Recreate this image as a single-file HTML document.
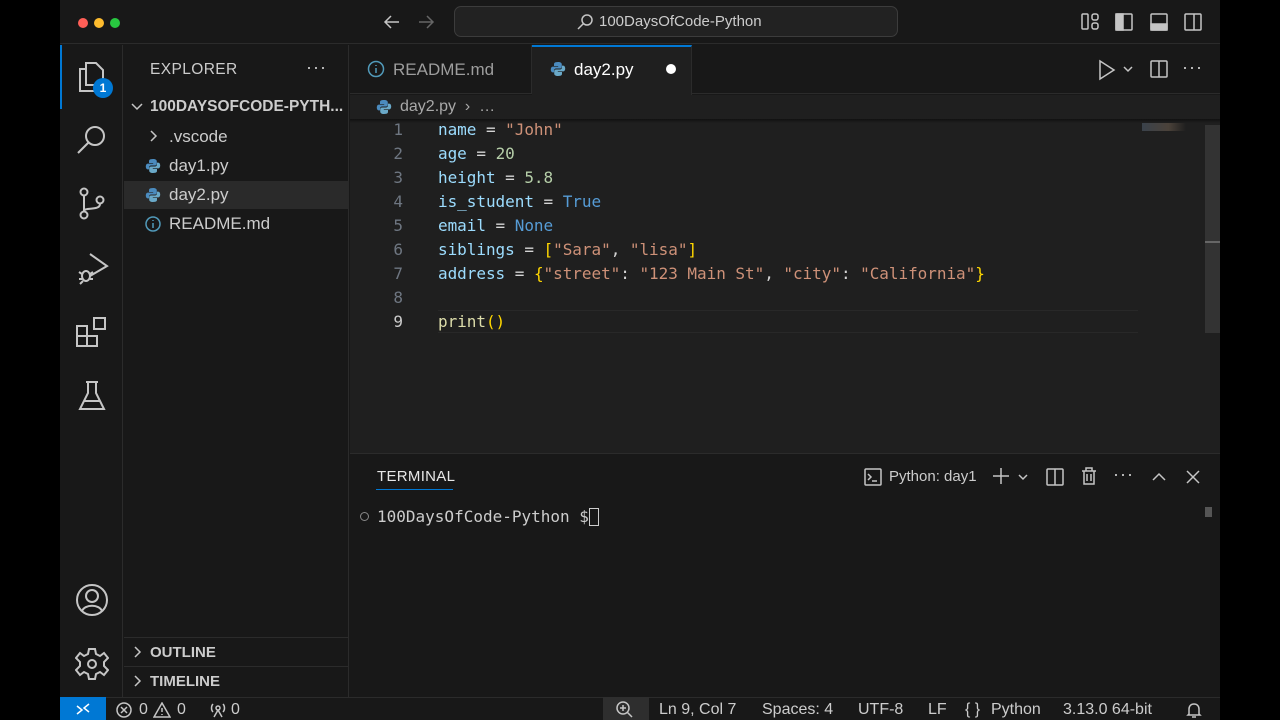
<!DOCTYPE html>
<html><head><meta charset="utf-8"><style>
*{margin:0;padding:0;box-sizing:border-box}
body{width:1280px;height:720px;background:#000;position:relative;overflow:hidden;font-family:"Liberation Sans",sans-serif;color:#ccc}
.a{position:absolute}
.win{left:60px;top:0;width:1160px;height:720px;background:#181818;position:absolute;overflow:hidden}
.mono{font-family:"DejaVu Sans Mono",monospace;font-size:16px}
svg{position:absolute;fill:none;stroke:#c5c5c5;stroke-width:1.5}
.code div{height:24px;line-height:24px;white-space:pre}
.v{color:#9cdcfe}.s{color:#ce9178}.n{color:#b5cea8}.k{color:#569cd6}.b{color:#ffd700}.f{color:#dcdcaa}.p{color:#d4d4d4}
.ln div{height:24px;line-height:24px;text-align:right;color:#6e7681}
.st{position:absolute;top:701px;font-size:16px;color:#ccc;white-space:pre}
</style></head><body>
<div class="win">
<div class="a" style="left:0;top:0;width:1160px;height:44px;background:#181818;border-bottom:1px solid #2b2b2b"></div>
<div class="a" style="left:18px;top:18px;width:10px;height:10px;border-radius:50%;background:#ff5f57"></div>
<div class="a" style="left:34px;top:18px;width:10px;height:10px;border-radius:50%;background:#febc2e"></div>
<div class="a" style="left:50px;top:18px;width:10px;height:10px;border-radius:50%;background:#28c840"></div>
<svg style="left:322px;top:12px" width="20" height="20"><path d="M17 10H3M9 4L3 10L9 16"/></svg>
<svg style="left:356px;top:12px;stroke:#666" width="20" height="20"><path d="M3 10H17M11 4L17 10L11 16"/></svg>
<div class="a" style="left:394px;top:6px;width:444px;height:31px;border:1px solid #3c3c3c;border-radius:7px;background:#222"></div>
<svg style="left:516px;top:13px" width="18" height="18"><circle cx="11" cy="7" r="5"/><path d="M7.5 10.5L2 16"/></svg>
<div class="a" style="left:539px;top:13px;font-size:15px;color:#ccc">100DaysOfCode-Python</div>
<svg style="left:1020px;top:12px" width="20" height="20"><rect x="2" y="2" width="6" height="15" rx="1"/><rect x="12" y="2" width="6" height="6" rx="2"/><rect x="12" y="11" width="6" height="6" rx="2"/></svg>
<svg style="left:1054px;top:12px" width="20" height="20"><rect x="2" y="2" width="16" height="16" rx="1"/><rect x="2" y="2" width="7" height="16" fill="#c5c5c5"/></svg>
<svg style="left:1089px;top:12px" width="20" height="20"><rect x="2" y="2" width="16" height="16" rx="1"/><rect x="2" y="12" width="16" height="6" fill="#c5c5c5"/></svg>
<svg style="left:1123px;top:12px" width="20" height="20"><rect x="2" y="2" width="16" height="16" rx="1"/><path d="M11 2V18"/></svg>
<div class="a" style="left:0;top:45px;width:63px;height:652px;background:#181818;border-right:1px solid #2b2b2b"></div>
<div class="a" style="left:0;top:45px;width:2px;height:64px;background:#0078d4"></div>
<svg style="left:16px;top:60px;stroke-width:2" width="32" height="34"><path d="M10 3H20L27 10V25H10Z"/><path d="M10 9H4V31H19V25"/></svg>
<div class="a" style="left:33px;top:78px;width:20px;height:20px;border-radius:50%;background:#0078d4;color:#fff;font-size:12px;font-weight:bold;text-align:center;line-height:20px">1</div>
<svg style="left:15px;top:123px;stroke-width:2" width="34" height="34"><circle cx="20" cy="13" r="9"/><path d="M13.5 19.5L3 30"/></svg>
<svg style="left:16px;top:187px;stroke-width:2" width="32" height="34"><circle cx="8" cy="5" r="3.5"/><circle cx="8" cy="28" r="3.5"/><circle cx="24" cy="13" r="3.5"/><path d="M8 9V24M24 17C24 24 8 20 8 24"/></svg>
<svg style="left:16px;top:252px;stroke-width:2" width="34" height="34"><path d="M14 2L31 14L14 24"/><ellipse cx="10" cy="24" rx="4" ry="5"/><path d="M3 20L6 22M3 27H6M4 32L7 29M17 20L14 22M17 27H14"/></svg>
<svg style="left:15px;top:316px;stroke-width:2" width="34" height="34"><rect x="2" y="10" width="10" height="10"/><rect x="2" y="20" width="10" height="10"/><rect x="12" y="20" width="10" height="10"/><rect x="19" y="2" width="11" height="11"/></svg>
<svg style="left:18px;top:380px;stroke-width:2" width="30" height="34"><path d="M8 2H20M10 2V13L2 29H26L18 13V2M6 21H22"/></svg>
<svg style="left:15px;top:583px;stroke-width:2" width="34" height="34"><circle cx="17" cy="17" r="15"/><circle cx="17" cy="13" r="6"/><path d="M7 28C10 21 24 21 27 28"/></svg>
<svg style="left:15px;top:647px;stroke-width:2" width="34" height="34"><path d="M14 2H20L21 7L25 9L29 6L33 11L29 15V19L33 23L29 28L25 25L21 27L20 32H14L13 27L9 25L5 28L1 23L5 19V15L1 11L5 6L9 9L13 7Z"/><circle cx="17" cy="17" r="4"/></svg>
<div class="a" style="left:64px;top:45px;width:225px;height:652px;background:#181818;border-right:1px solid #2b2b2b"></div>
<div class="a" style="left:90px;top:61px;font-size:15.5px;color:#ccc;letter-spacing:.4px">EXPLORER</div>
<div class="a" style="left:246px;top:57px;font-size:18px;color:#ccc;letter-spacing:1px">···</div>
<svg style="left:70px;top:100px" width="14" height="14"><path d="M2 4L7 9L12 4"/></svg>
<div class="a" style="left:90px;top:98px;font-size:15.5px;font-weight:bold;color:#ccc">100DAYSOFCODE-PYTH...</div>
<svg style="left:87px;top:129px" width="14" height="14"><path d="M4 2L9 7L4 12"/></svg>
<div class="a" style="left:109px;top:127px;font-size:17px;color:#ccc">.vscode</div>
<div class="a" style="left:64px;top:181px;width:225px;height:28px;background:#2a2a2a"></div>
<svg style="left:85px;top:158px;stroke:none" width="16" height="16"><path fill="#4b8bbe" d="M8 1C4 1 4 2.5 4 3.5V5H8.2V5.6H2.8C1.5 5.6 0.8 7 0.8 8.5S1.5 11.4 2.8 11.4H4V9.6C4 8.4 5 7.5 6 7.5H10C11 7.5 11.8 6.7 11.8 5.7V3.4C11.8 2 10.5 1 8 1Z"/><path fill="#6aa9c8" d="M8 15C12 15 12 13.5 12 12.5V11H7.8V10.4H13.2C14.5 10.4 15.2 9 15.2 7.5S14.5 4.6 13.2 4.6H12V6.4C12 7.6 11 8.5 10 8.5H6C5 8.5 4.2 9.3 4.2 10.3V12.6C4.2 14 5.5 15 8 15Z"/></svg>
<div class="a" style="left:109px;top:156px;font-size:17px;color:#ccc">day1.py</div>
<svg style="left:85px;top:187px;stroke:none" width="16" height="16"><path fill="#4b8bbe" d="M8 1C4 1 4 2.5 4 3.5V5H8.2V5.6H2.8C1.5 5.6 0.8 7 0.8 8.5S1.5 11.4 2.8 11.4H4V9.6C4 8.4 5 7.5 6 7.5H10C11 7.5 11.8 6.7 11.8 5.7V3.4C11.8 2 10.5 1 8 1Z"/><path fill="#6aa9c8" d="M8 15C12 15 12 13.5 12 12.5V11H7.8V10.4H13.2C14.5 10.4 15.2 9 15.2 7.5S14.5 4.6 13.2 4.6H12V6.4C12 7.6 11 8.5 10 8.5H6C5 8.5 4.2 9.3 4.2 10.3V12.6C4.2 14 5.5 15 8 15Z"/></svg>
<div class="a" style="left:109px;top:185px;font-size:17px;color:#ccc">day2.py</div>
<svg style="left:85px;top:216px;stroke:#519aba" width="16" height="16"><circle cx="8" cy="8" r="7"/><path d="M8 7V12M8 4V5"/></svg>
<div class="a" style="left:109px;top:214px;font-size:17px;color:#ccc">README.md</div>
<div class="a" style="left:64px;top:637px;width:225px;height:1px;background:#2b2b2b"></div>
<svg style="left:71px;top:645px" width="14" height="14"><path d="M4 2L9 7L4 12"/></svg>
<div class="a" style="left:90px;top:644px;font-size:15px;font-weight:bold;color:#ccc">OUTLINE</div>
<div class="a" style="left:64px;top:666px;width:225px;height:1px;background:#2b2b2b"></div>
<svg style="left:71px;top:674px" width="14" height="14"><path d="M4 2L9 7L4 12"/></svg>
<div class="a" style="left:90px;top:673px;font-size:15px;font-weight:bold;color:#ccc">TIMELINE</div>
<div class="a" style="left:290px;top:45px;width:870px;height:49px;background:#181818;border-bottom:1px solid #2b2b2b"></div>
<div class="a" style="left:290px;top:45px;width:182px;height:49px;border-right:1px solid #2b2b2b"></div>
<svg style="left:307px;top:60px;stroke:#519aba" width="18" height="18"><circle cx="9" cy="9" r="7.5"/><path d="M9 8V13M9 5V6"/></svg>
<div class="a" style="left:333px;top:60px;font-size:17px;color:#9d9d9d">README.md</div>
<div class="a" style="left:472px;top:45px;width:160px;height:50px;background:#1f1f1f;border-top:2px solid #0078d4;border-right:1px solid #2b2b2b"></div>
<svg style="left:490px;top:61px;stroke:none" width="16" height="16"><path fill="#4b8bbe" d="M8 1C4 1 4 2.5 4 3.5V5H8.2V5.6H2.8C1.5 5.6 0.8 7 0.8 8.5S1.5 11.4 2.8 11.4H4V9.6C4 8.4 5 7.5 6 7.5H10C11 7.5 11.8 6.7 11.8 5.7V3.4C11.8 2 10.5 1 8 1Z"/><path fill="#6aa9c8" d="M8 15C12 15 12 13.5 12 12.5V11H7.8V10.4H13.2C14.5 10.4 15.2 9 15.2 7.5S14.5 4.6 13.2 4.6H12V6.4C12 7.6 11 8.5 10 8.5H6C5 8.5 4.2 9.3 4.2 10.3V12.6C4.2 14 5.5 15 8 15Z"/></svg>
<div class="a" style="left:514px;top:60px;font-size:17px;color:#fff">day2.py</div>
<div class="a" style="left:606px;top:64px;width:10px;height:10px;border-radius:50%;background:#fff"></div>
<svg style="left:1037px;top:59px" width="20" height="22"><path d="M3 2L17 11L3 20Z"/></svg>
<svg style="left:1062px;top:64px" width="12" height="10"><path d="M2 3L6 7L10 3"/></svg>
<svg style="left:1089px;top:59px" width="20" height="20"><rect x="2" y="2" width="16" height="16" rx="1"/><path d="M10 2V18"/></svg>
<div class="a" style="left:1122px;top:57px;font-size:18px;color:#ccc;letter-spacing:1px">···</div>
<div class="a" style="left:290px;top:95px;width:870px;height:602px;background:#1f1f1f"></div>
<svg style="left:316px;top:99px;stroke:none" width="16" height="16"><path fill="#4b8bbe" d="M8 1C4 1 4 2.5 4 3.5V5H8.2V5.6H2.8C1.5 5.6 0.8 7 0.8 8.5S1.5 11.4 2.8 11.4H4V9.6C4 8.4 5 7.5 6 7.5H10C11 7.5 11.8 6.7 11.8 5.7V3.4C11.8 2 10.5 1 8 1Z"/><path fill="#6aa9c8" d="M8 15C12 15 12 13.5 12 12.5V11H7.8V10.4H13.2C14.5 10.4 15.2 9 15.2 7.5S14.5 4.6 13.2 4.6H12V6.4C12 7.6 11 8.5 10 8.5H6C5 8.5 4.2 9.3 4.2 10.3V12.6C4.2 14 5.5 15 8 15Z"/></svg>
<div class="a" style="left:340px;top:98px;font-size:16px;color:#a9a9a9">day2.py &nbsp;›&nbsp; …</div>
<div class="a" style="left:290px;top:119px;width:915px;height:4px;background:linear-gradient(#111,#1f1f1f)"></div>
<div class="a" style="left:378px;top:310px;width:700px;height:23px;border-top:1px solid #282828;border-bottom:1px solid #282828"></div>
<div class="a ln mono" style="left:300px;top:118px;width:43px">
<div>1</div><div>2</div><div>3</div><div>4</div><div>5</div><div>6</div><div>7</div><div>8</div><div style="color:#ccc">9</div></div>
<div class="a code mono" style="left:378px;top:118px;letter-spacing:-0.04px">
<div><span class="v">name</span><span class="p"> = </span><span class="s">"John"</span></div>
<div><span class="v">age</span><span class="p"> = </span><span class="n">20</span></div>
<div><span class="v">height</span><span class="p"> = </span><span class="n">5.8</span></div>
<div><span class="v">is_student</span><span class="p"> = </span><span class="k">True</span></div>
<div><span class="v">email</span><span class="p"> = </span><span class="k">None</span></div>
<div><span class="v">siblings</span><span class="p"> = </span><span class="b">[</span><span class="s">"Sara"</span><span class="p">, </span><span class="s">"lisa"</span><span class="b">]</span></div>
<div><span class="v">address</span><span class="p"> = </span><span class="b">{</span><span class="s">"street"</span><span class="p">: </span><span class="s">"123 Main St"</span><span class="p">, </span><span class="s">"city"</span><span class="p">: </span><span class="s">"California"</span><span class="b">}</span></div>
<div> </div>
<div><span class="f">print</span><span class="b">()</span></div>
</div>
<div class="a" style="left:1082px;top:123px;width:44px;height:8px;background:linear-gradient(90deg,#567 0,#765 60%,transparent);opacity:.5"></div>
<div class="a" style="left:1145px;top:125px;width:15px;height:208px;background:#333"></div>
<div class="a" style="left:1145px;top:241px;width:15px;height:2px;background:#666"></div>
<div class="a" style="left:290px;top:453px;width:870px;height:244px;background:#181818;border-top:1px solid #2b2b2b"></div>
<div class="a" style="left:317px;top:468px;font-size:15px;color:#e7e7e7;letter-spacing:.3px">TERMINAL</div>
<div class="a" style="left:316px;top:489px;width:77px;height:1px;background:#0078d4"></div>
<svg style="left:803px;top:467px" width="20" height="20"><rect x="2" y="2" width="16" height="16" rx="1"/><path d="M5 7L8 10L5 13M9 14H14"/></svg>
<div class="a" style="left:829px;top:468px;font-size:15px;color:#ccc">Python: day1</div>
<svg style="left:931px;top:466px" width="20" height="20"><path d="M10 2V18M2 10H18"/></svg>
<svg style="left:957px;top:472px" width="12" height="10"><path d="M2 3L6 7L10 3"/></svg>
<svg style="left:985px;top:467px" width="20" height="20"><rect x="2" y="2" width="16" height="16" rx="1"/><path d="M10 2V18"/></svg>
<svg style="left:1019px;top:466px" width="20" height="20"><path d="M3 5H17M7 5V2H13V5M5 5V18H15V5M8 8V15M12 8V15"/></svg>
<div class="a" style="left:1053px;top:464px;font-size:18px;color:#ccc;letter-spacing:1px">···</div>
<svg style="left:1089px;top:467px" width="20" height="20"><path d="M4 13L10 7L16 13"/></svg>
<svg style="left:1123px;top:467px" width="20" height="20"><path d="M4 4L16 16M16 4L4 16"/></svg>
<div class="a" style="left:300px;top:512px;width:9px;height:9px;border-radius:50%;border:1px solid #888"></div>
<div class="a mono" style="left:317px;top:507px;color:#ccc;white-space:pre">100DaysOfCode-Python $ </div>
<div class="a" style="left:529px;top:508px;width:10px;height:18px;border:1px solid #ccc"></div>
<div class="a" style="left:1145px;top:507px;width:7px;height:10px;background:#555"></div>
<div class="a" style="left:0;top:697px;width:1160px;height:23px;background:#181818;border-top:1px solid #2b2b2b"></div>
<div class="a" style="left:0;top:697px;width:46px;height:23px;background:#0078d4"></div>
<svg style="left:15px;top:701px;stroke:#fff" width="16" height="16"><path d="M2 13L7 9L2 5M14 3L9 7L14 11"/></svg>
<svg style="left:56px;top:702px" width="16" height="16"><circle cx="8" cy="8" r="7"/><path d="M5 5L11 11M11 5L5 11"/></svg>
<div class="st" style="left:79px">0</div>
<svg style="left:93px;top:702px" width="18" height="16"><path d="M9 1L17 15H1Z"/><path d="M9 6V10M9 12V13"/></svg>
<div class="st" style="left:117px">0</div>
<svg style="left:149px;top:702px" width="18" height="16"><circle cx="9" cy="6" r="2"/><path d="M9 8L5 15M9 8L13 15M4 2C2 4 2 8 4 10M14 2C16 4 16 8 14 10"/></svg>
<div class="st" style="left:171px">0</div>
<div class="a" style="left:543px;top:697px;width:46px;height:23px;background:#2e2e2e"></div>
<svg style="left:556px;top:701px" width="18" height="18"><circle cx="7" cy="7" r="6"/><path d="M11 11L16 16M7 4V10M4 7H10"/></svg>
<div class="st" style="left:599px">Ln 9, Col 7</div>
<div class="st" style="left:702px">Spaces: 4</div>
<div class="st" style="left:798px">UTF-8</div>
<div class="st" style="left:868px">LF</div>
<div class="st" style="left:905px">{ }</div>
<div class="st" style="left:931px">Python</div>
<div class="st" style="left:1003px">3.13.0 64-bit</div>
<svg style="left:1125px;top:701px" width="18" height="18"><path d="M4 13V8C4 5 6 3 9 3S14 5 14 8V13L15 14H3ZM7 16H11"/></svg>
</div>
</body></html>
